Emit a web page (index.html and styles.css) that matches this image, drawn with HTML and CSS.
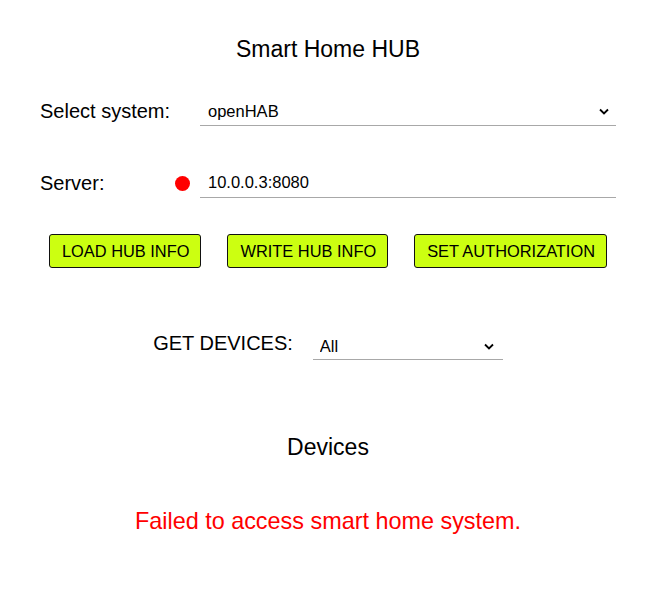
FILE: index.html
```html
<!DOCTYPE html>
<html lang="en">
<head>
<meta charset="utf-8">
<title>Smart Home HUB</title>
<link rel="stylesheet" href="styles.css">
</head>
<body>
<div class="page">
  <div class="title">Smart Home HUB</div>

  <div class="field-row row-system">
    <div class="label-cell"><span class="label">Select system:</span></div>
    <div class="select-wrap wide">
      <select class="select"><option>openHAB</option></select>
      <svg class="chevron" width="10" height="7" viewBox="0 0 10 7"><path d="M1 1.5 L5 5.5 L9 1.5" fill="none" stroke="#000" stroke-width="1.8"/></svg>
    </div>
  </div>

  <div class="field-row row-server">
    <div class="label-cell"><span class="label">Server:</span><span class="dot"></span></div>
    <input class="input wide" type="text" value="10.0.0.3:8080">
  </div>

  <div class="buttons">
    <button class="btn">LOAD HUB INFO</button>
    <button class="btn">WRITE HUB INFO</button>
    <button class="btn">SET AUTHORIZATION</button>
  </div>

  <div class="devices-row">
    <span class="label">GET DEVICES:</span>
    <div class="select-wrap small">
      <select class="select"><option>All</option></select>
      <svg class="chevron" width="10" height="7" viewBox="0 0 10 7"><path d="M1 1.5 L5 5.5 L9 1.5" fill="none" stroke="#000" stroke-width="1.8"/></svg>
    </div>
  </div>

  <div class="heading">Devices</div>
  <div class="error">Failed to access smart home system.</div>
</div>
</body>
</html>
```

FILE: styles.css
```css
* { box-sizing: border-box; }
body {
  margin: 0;
  background: #fff;
  font-family: "Liberation Sans", Arial, sans-serif;
  color: #000;
}
.page {
  padding: 36px 31px 0 40px;
  display: flex;
  flex-direction: column;
}
.title {
  font-size: 23px;
  line-height: 26px;
  text-align: center;
}
.field-row {
  display: flex;
  align-items: center;
}
.row-system { margin-top: 34px; }
.row-server { margin-top: 42px; }
.label-cell {
  width: 160px;
  flex: none;
  display: flex;
  align-items: center;
  justify-content: space-between;
}
.label {
  font-size: 20px;
  line-height: 23px;
}
.dot {
  width: 15px;
  height: 15px;
  border-radius: 50%;
  background: #ff0000;
  margin-right: 10px;
  margin-top: 1px;
}
.wide { flex: 1; }
.select-wrap {
  position: relative;
  height: 30px;
  border-bottom: 1px solid #a8a8a8;
  display: flex;
  align-items: center;
}
.select {
  appearance: none;
  -webkit-appearance: none;
  border: none;
  background: transparent;
  outline: none;
  width: 100%;
  height: 29px;
  font-family: "Liberation Sans", Arial, sans-serif;
  font-size: 16.5px;
  color: #000;
  padding: 0 0 0 8px;
}
.chevron {
  position: absolute;
  right: 7px;
  top: 12px;
}
.small .chevron { right: 9px; top: 13px; }
.small .select { padding-left: 7px; padding-top: 2px; }
.input {
  height: 30px;
  border: none;
  border-bottom: 1px solid #a8a8a8;
  outline: none;
  font-family: "Liberation Sans", Arial, sans-serif;
  font-size: 16.5px;
  color: #000;
  padding: 0 0 0 8px;
  background: transparent;
}
.buttons {
  margin-top: 36px;
  display: flex;
  justify-content: center;
  gap: 26px;
}
.btn {
  height: 34px;
  padding: 0 11px 0 12px;
  background: #ccff11;
  border: 1px solid #111;
  border-radius: 3px;
  font-family: "Liberation Sans", Arial, sans-serif;
  font-size: 16.4px;
  color: #000;
}
.devices-row {
  margin-top: 62px;
  display: flex;
  justify-content: center;
  align-items: center;
  gap: 20px;
}
.devices-row .label { margin-top: -3px; }
.select-wrap.small { width: 190px; }
.heading {
  margin-top: 74px;
  font-size: 23px;
  line-height: 26px;
  text-align: center;
}
.error {
  margin-top: 48px;
  font-size: 23.4px;
  line-height: 26px;
  text-align: center;
  color: #ff0000;
}
```
